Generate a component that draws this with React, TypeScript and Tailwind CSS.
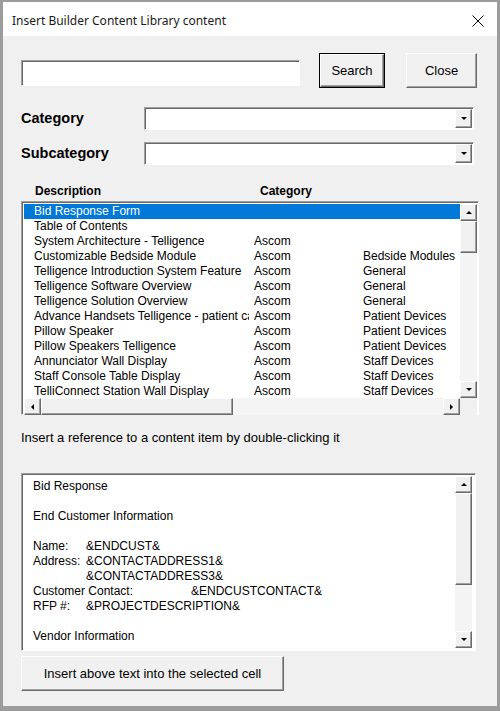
import React from "react";

const raised =
  "border border-t-white border-l-white border-r-[#696969] border-b-[#696969] shadow-[inset_-1px_-1px_#a0a0a0]";
const sunken =
  "border border-t-[#a0a0a0] border-l-[#a0a0a0] border-r-white border-b-white shadow-[inset_1px_1px_#696969]";

type Row = { desc: string; cat: string; sub: string };

const rows: Row[] = [
  { desc: "Bid Response Form", cat: "", sub: "" },
  { desc: "Table of Contents", cat: "", sub: "" },
  { desc: "System Architecture - Telligence", cat: "Ascom", sub: "" },
  { desc: "Customizable Bedside Module", cat: "Ascom", sub: "Bedside Modules" },
  { desc: "Telligence Introduction System Feature", cat: "Ascom", sub: "General" },
  { desc: "Telligence Software Overview", cat: "Ascom", sub: "General" },
  { desc: "Telligence Solution Overview", cat: "Ascom", sub: "General" },
  { desc: "Advance Handsets Telligence - patient care", cat: "Ascom", sub: "Patient Devices" },
  { desc: "Pillow Speaker", cat: "Ascom", sub: "Patient Devices" },
  { desc: "Pillow Speakers Telligence", cat: "Ascom", sub: "Patient Devices" },
  { desc: "Annunciator Wall Display", cat: "Ascom", sub: "Staff Devices" },
  { desc: "Staff Console Table Display", cat: "Ascom", sub: "Staff Devices" },
  { desc: "TelliConnect Station Wall Display", cat: "Ascom", sub: "Staff Devices" },
];

// label / value pairs for the preview box; null = blank line
const preview: ([string, string, number] | null)[] = [
  ["Bid Response", "", 0],
  null,
  ["End Customer Information", "", 0],
  null,
  ["Name:", "&ENDCUST&", 53],
  ["Address:", "&CONTACTADDRESS1&", 53],
  ["", "&CONTACTADDRESS3&", 53],
  ["Customer Contact:", "&ENDCUSTCONTACT&", 158],
  ["RFP #:", "&PROJECTDESCRIPTION&", 53],
  null,
  ["Vendor Information", "", 0],
];

function Arrow({ dir }: { dir: "up" | "down" | "left" | "right" }) {
  const pts = {
    up: "1,5 4,2 7,5",
    down: "1,2 4,5 7,2",
    left: "5,1 2,4 5,7",
    right: "2,1 5,4 2,7",
  }[dir];
  return (
    <svg width="8" height="8" viewBox="0 0 8 8">
      <polygon points={pts} fill="#000" />
    </svg>
  );
}

function ScrollBtn({ dir }: { dir: "up" | "down" | "left" | "right" }) {
  return (
    <div className={`flex h-[17px] w-[17px] shrink-0 items-center justify-center bg-[#f0f0f0] ${raised}`}>
      <Arrow dir={dir} />
    </div>
  );
}

function Combo() {
  return (
    <div className={`flex h-[23px] w-[330px] items-center justify-end bg-white pr-[1px] ${sunken}`}>
      <div className={`flex h-[19px] w-[17px] items-center justify-center bg-[#f0f0f0] ${raised}`}>
        <Arrow dir="down" />
      </div>
    </div>
  );
}

export default function App() {
  return (
    <div className="h-[711px] w-[500px] bg-[#9c9c9c] px-[3px] pb-[5px] pt-[2px] font-['Liberation_Sans',Arial,sans-serif] text-black">
      <div className="flex h-full flex-col bg-[#f0f0f0]">
        <div className="flex h-[34px] items-center justify-between bg-white pl-[9px] pr-[13px] pt-[3px]">
          <span className="font-['Noto_Sans',sans-serif] text-[12px] text-[#1a1a1a]">
            Insert Builder Content Library content
          </span>
          <svg width="12" height="12" viewBox="0 0 12 12">
            <path d="M0.5 0.5 L11.5 11.5 M11.5 0.5 L0.5 11.5" stroke="#000" strokeWidth="1" />
          </svg>
        </div>

        <div className="flex flex-col pl-[18px]">
          <div className="mt-[17px] flex items-start">
            <div className={`mt-[7px] h-[26px] w-[279px] bg-white ${sunken}`} />
            <button className="ml-[19px] h-[35px] w-[66px] border border-black bg-[#f0f0f0] p-0">
              <div className={`flex h-full w-full items-center justify-center text-[13px] ${raised}`}>
                Search
              </div>
            </button>
            <button className={`ml-[21px] flex h-[35px] w-[71px] items-center justify-center bg-[#f0f0f0] text-[13px] ${raised}`}>
              Close
            </button>
          </div>

          <div className="mt-[19px] flex items-center">
            <span className="w-[123px] text-[14.5px] font-bold">Category</span>
            <Combo />
          </div>
          <div className="mt-[12px] flex items-center">
            <span className="w-[123px] text-[14.5px] font-bold">Subcategory</span>
            <Combo />
          </div>

          <div className="mt-[16px] flex h-[20px] items-center text-[12px] font-bold">
            <span className="w-[239px] pl-[14px]">Description</span>
            <span>Category</span>
          </div>

          <div className={`flex h-[214px] w-[458px] flex-col bg-white p-[1px] pl-[2px] pt-[2px] ${sunken}`}>
            <div className="flex">
              <div className="h-[194px] w-[437px] overflow-hidden text-[12px] leading-[15px]">
                {rows.map((r, i) => (
                  <div
                    key={r.desc}
                    className={`flex h-[15px] whitespace-nowrap pl-[10px] ${i === 0 ? "bg-[#0078d7] text-white" : ""}`}
                  >
                    <span className="w-[215px] overflow-hidden">{r.desc}</span>
                    <span className="ml-[5px] w-[109px]">{r.cat}</span>
                    <span>{r.sub}</span>
                  </div>
                ))}
              </div>
              <div className="flex h-[194px] w-[17px] flex-col bg-[#f4f4f4]">
                <ScrollBtn dir="up" />
                <div className={`h-[32px] w-[17px] bg-[#f0f0f0] ${raised}`} />
                <div className="flex-1" />
                <ScrollBtn dir="down" />
              </div>
            </div>
            <div className="flex h-[17px]">
              <div className="flex w-[437px] bg-[#f4f4f4]">
                <ScrollBtn dir="left" />
                <div className={`h-[17px] w-[192px] bg-[#f0f0f0] ${raised}`} />
                <div className="flex-1" />
                <ScrollBtn dir="right" />
              </div>
              <div className="w-[17px] bg-[#f0f0f0]" />
            </div>
          </div>

          <p className="mt-[15px] h-[15px] text-[13px] leading-[15px]">
            Insert a reference to a content item by double-clicking it
          </p>

          <div className={`mt-[28px] flex h-[178px] w-[455px] bg-white p-[2px] ${sunken}`}>
            <div className="flex-1 pl-[9px] pt-[3px] text-[12px] leading-[15px]">
              {preview.map((line, i) =>
                line === null ? (
                  <div key={i} className="h-[15px]" />
                ) : (
                  <div key={i} className="flex h-[15px] whitespace-nowrap">
                    {line[2] > 0 ? (
                      <>
                        <span style={{ width: line[2] }}>{line[0]}</span>
                        <span>{line[1]}</span>
                      </>
                    ) : (
                      <span>{line[0]}</span>
                    )}
                  </div>
                ),
              )}
            </div>
            <div className="mr-[1px] flex w-[17px] flex-col bg-[#f4f4f4]">
              <ScrollBtn dir="up" />
              <div className={`h-[92px] w-[17px] bg-[#f0f0f0] ${raised}`} />
              <div className="flex-1" />
              <ScrollBtn dir="down" />
            </div>
          </div>

          <button className={`mt-[5px] flex h-[35px] w-[263px] items-center justify-center bg-[#f0f0f0] text-[13px] ${raised}`}>
            Insert above text into the selected cell
          </button>
        </div>
      </div>
    </div>
  );
}
